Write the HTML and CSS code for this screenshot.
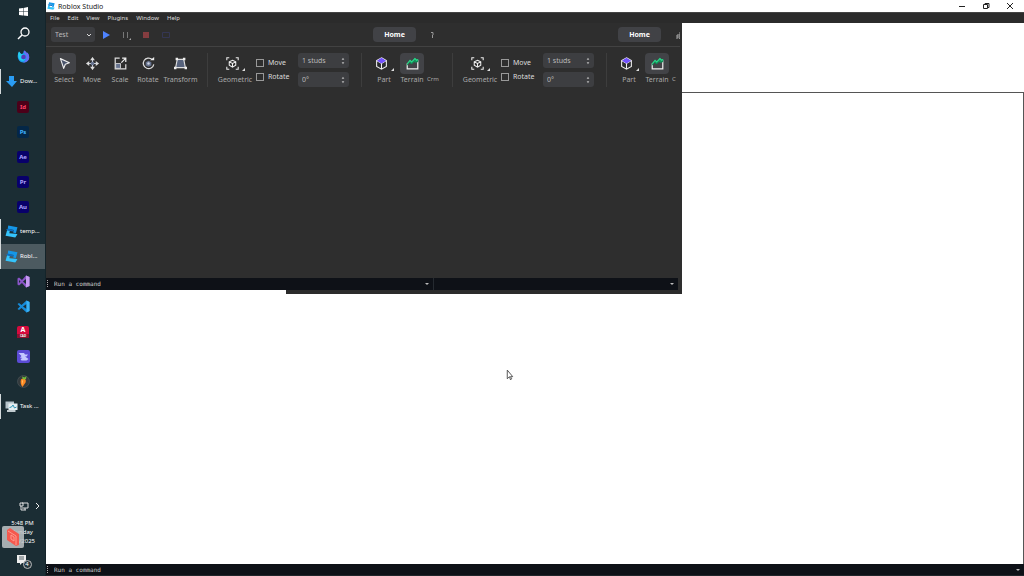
FILE: index.html
```html
<!DOCTYPE html>
<html lang="en">
<head>
<meta charset="utf-8">
<title>Roblox Studio</title>
<link rel="stylesheet" href="styles.css">
</head>
<body>
<svg class="defs" aria-hidden="true">
  <symbol id="studio" viewBox="0 0 24 24"><path fill="#1597e8" d="M6 1l17 3-3 11-5-1 1-5-11-2z"/><path fill="#35c4fb" d="M4 9l5 1-1 5 11 1 4 1-4 6-18-3z"/><path fill="#0b6fc2" d="M2 8l4-1 10 2-1 3-6-1-5-1z"/></symbol>
  <symbol id="select" viewBox="0 0 16 16"><path d="M3 2l11 5-5 2-2 5z" fill="#49536b" stroke="#eee" stroke-width="1.4" stroke-linejoin="round"/></symbol>
  <symbol id="move" viewBox="0 0 16 16"><path d="M8 1v14M1 8h14" stroke="#c9cedd" stroke-width="1.4"/><path d="M8 0l3 4H5zM8 16l3-4H5zM0 8l4-3v6zM16 8l-4-3v6z" fill="#ddd"/><path d="M6 6h4v4H6z" fill="#66738f"/></symbol>
  <symbol id="scale" viewBox="0 0 16 16"><path d="M7 1.500H1.500v13h13V9" fill="none" stroke="#ddd" stroke-width="1.5"/><path d="M2 8h6v6H2z" fill="#66738f" stroke="#ddd"/><path d="M9 7l5-5M10 1.500h4.500V6" fill="none" stroke="#eee" stroke-width="1.500"/></symbol>
  <symbol id="rotate" viewBox="0 0 16 16"><path d="M12.500 3A6.500 6.500 0 1 0 14.500 9" fill="none" stroke="#ddd" stroke-width="1.500"/><path d="M10 4h5V0z" fill="#eee"/><path d="M8 4.500l3.500 2v4L8 12l-3.500-1.500v-4z" fill="#66738f"/><circle cx="8" cy="8" r="1.500" fill="#ccd2e2"/></symbol>
  <symbol id="transform" viewBox="0 0 16 16"><path d="M4 3h8l2 10H2z" fill="#56627c" stroke="#ddd" stroke-width="1.400"/><path d="M2 1h3v3H2zM11 1h3v3h-3zM0 12h3v3H0zM13 12h3v3h-3z" fill="#eee"/></symbol>
  <symbol id="geometric" viewBox="0 0 16 16"><path d="M1 4V1h3M12 1h3v3M15 12v3h-3M4 15H1v-3M8 4l4 2v4l-4 2.500L4 10V6zM4 6l4 2 4-2M8 8v4" fill="none" stroke="#eee" stroke-width="1.300"/></symbol>
  <symbol id="part" viewBox="0 0 16 16"><path d="M8 1l6 3.500v7L8 15l-6-3.500v-7z" fill="#292b30"/><path d="M8 1.500v6.500M8 8v7M2 4.500l6 3.500 6-3.500M8 1l6 3.500v7L8 15l-6-3.500v-7z" fill="none" stroke="#eee" stroke-width="1.300"/><path d="M8 1l5.500 3.500L8 8 2.500 4.500z" fill="#7251ff"/></symbol>
  <symbol id="terrain" viewBox="0 0 16 16"><path d="M1.500 8v6.500h13V4" fill="none" stroke="#eee" stroke-width="1.500"/><path d="M1 9l4-5 2 2 4-5 2 2 2-1v4l-3 1-2-1-3 3-3-2-3 4z" fill="#128f59"/><path d="M1.500 8.500L5 4l2 2 4-4 2 2 2-1" fill="none" stroke="#2cd98b" stroke-width="1.400"/></symbol>
  <symbol id="spin" viewBox="0 0 6 10"><path d="M3 0l2 3H1zM3 10l2-3H1z" fill="#bbb"/></symbol>
  <symbol id="pin" viewBox="0 0 8 8"><path d="M1 8V4h3M1 6h3V1h4M4 3h4M3 8l3-4" fill="none" stroke="#aaa"/></symbol>
</svg>
<div class="desktop">
  <nav class="taskbar" aria-label="Taskbar">
    <button class="task short" aria-label="Start"><svg class="i9" viewBox="0 0 18 18"><path fill="#fff" d="M0 3l8-1v7H0zM9 2l9-2v9H9zM0 10h8v7l-8-1zM9 10h9v8l-9-1z"/></svg></button>
    <button class="task short" aria-label="Search"><svg class="i13" viewBox="0 0 13 13"><circle cx="8" cy="5" r="4" fill="none" stroke="#fff" stroke-width="1.300"/><path d="M5 8l-4 4" stroke="#fff" stroke-width="1.500"/></svg></button>
    <button class="task" aria-label="Firefox"><svg class="i13" viewBox="0 0 26 26"><path d="M2 8l2-5 4 5 4-1 2-6c4 2 5 4 6 6l1-2c4 6 5 13 0 17-6 5-15 4-18-3-2-4-2-7-1-11z" fill="#1d9cf0"/><path d="M2 8l2-5 4 5c5 0 6 3 5 5l-5 1c0 5 5 6 9 4-4 6-12 4-14-3z" fill="#26cff0"/><path d="M14 1c4 2 5 4 6 6l1-2c4 6 5 13 0 17-3 2-6 3-9 3 7-4 9-10 5-16-2-2-4-3-3-8z" fill="#6b6af5"/><circle cx="13" cy="14" r="4.500" fill="#5a38b8"/></svg></button>
    <button class="task named open"><svg class="i13" viewBox="0 0 13 13"><path d="M4 1h5v5h3l-5 6-6-6h3z" fill="#2a9df4"/></svg><span>Dow...</span></button>
    <button class="task"><span class="app id">Id</span></button>
    <button class="task"><span class="app ps">Ps</span></button>
    <button class="task"><span class="app ae">Ae</span></button>
    <button class="task"><span class="app ae">Pr</span></button>
    <button class="task"><span class="app ae">Au</span></button>
    <button class="task named open"><svg class="i13"><use href="#studio"/></svg><span>temp...</span></button>
    <button class="task named open current"><svg class="i13"><use href="#studio"/></svg><span>Robl...</span></button>
    <button class="task" aria-label="Visual Studio"><svg class="i13" viewBox="0 0 26 26"><path fill="#8b55c8" d="M1 7l3-2 6 5 8-9 7 3v18l-7 3-8-9-6 5-3-2zM4 10v6l3-3zM18 8l-6 5 6 5z" fill-rule="evenodd"/><path fill="#c69af2" d="M18 1l7 3v18l-7 3z"/></svg></button>
    <button class="task" aria-label="Visual Studio Code"><svg class="i13" viewBox="0 0 26 26"><path fill="#168bd9" d="M1 8l3-2 5 4L19 1l6 3v18l-6 3-10-9-5 4-3-2 5-5zM19 8l-7 5 7 5z" fill-rule="evenodd"/><path fill="#38b1f5" d="M19 1l6 3v18l-6 3z"/></svg></button>
    <button class="task"><span class="app cad">A<small>CAD</small></span></button>
    <button class="task" aria-label="Purple app"><svg class="i13" viewBox="0 0 26 26"><rect width="26" height="26" rx="4" fill="#5b4bd5"/><path d="M3 6h11l2 3h6l-3 4h-3l7 5-4 3H9l-2-3 4-2-5-1 3-3z" fill="#c5c9ff"/></svg></button>
    <button class="task" aria-label="FL Studio"><svg class="i13" viewBox="0 0 26 26"><circle cx="13" cy="13" r="12" fill="#343a3d" stroke="#596266"/><path d="M8 9c4-4 12-1 9 6l-6 9c-3-3-5-10-3-15z" fill="#ff8a24"/><path d="M12 9l-2-6 5 2 4-3-1 6z" fill="#6fbe3b"/><path d="M10 11l2 0-1 9z" fill="#ffd27a"/></svg></button>
    <button class="task named open"><svg class="i13" viewBox="0 0 26 26"><path d="M1 3h17v14H1z" fill="#b5c3ca"/><path d="M7 7h18v13H7z" fill="#e4eef2"/><path d="M9 15l4-1 3-4 3 6 4-2" fill="none" stroke="#2d94b5" stroke-width="2"/><path d="M4 20h17v4H4z" fill="#c2ccd0"/></svg><span>Task ...</span></button>
    <div class="tray">
      <div class="tray-icons"><svg class="net" viewBox="0 0 10 9"><path d="M3 1h6v5H3M1 1v3h3V1zM2 4v4h5M6 6v2" fill="none" stroke="#ddd"/></svg><svg class="more" viewBox="0 0 5 8"><path d="M1 1l3 3-3 3" fill="none" stroke="#eee"/></svg></div>
      <div class="clock"><time>5:48 PM</time><span>Sunday</span><span>8/3/2025</span>
        <svg class="drag" viewBox="0 0 22 22"><rect width="22" height="22" rx="2" fill="#bec4c7" fill-opacity=".85"/><path d="M5 4l3-2 9 6v11l-3 1-9-6z" fill="#f4594e"/><path d="M6 5l8 5v9M9 9l3 2v4l-3-2z" fill="none" stroke="#ff9a8f"/></svg>
      </div>
      <button class="notice" aria-label="4 notifications"><svg viewBox="0 0 14 14"><path d="M1 1h9v8H6l-2 2V9H1z" fill="#eee"/><path d="M3 3h5M3 5h5" stroke="#526067"/></svg><span class="count">4</span></button>
    </div>
  </nav>
  <main class="window">
    <header class="titlebar"><svg class="logo"><use href="#studio"/></svg><h1>Roblox Studio</h1>
      <div class="controls"><button aria-label="Minimize"><svg viewBox="0 0 8 8"><path d="M1 4.500h6" stroke="#222"/></svg></button><button aria-label="Restore"><svg viewBox="0 0 8 8"><path d="M1.500 2.500h4v4h-4zM3 2.500v-1h4v4H6" fill="none" stroke="#222"/></svg></button><button aria-label="Close"><svg viewBox="0 0 8 8"><path d="M1 1l6 6M7 1L1 7" stroke="#222"/></svg></button></div>
    </header>
    <nav class="menu" aria-label="Menu"><button>File</button><button>Edit</button><button>View</button><button>Plugins</button><button>Window</button><button>Help</button></nav>
    <div class="stage">
      <section class="panel">
        <div class="panes">
          <div class="pane first">
            <div class="tabs">
              <div class="mode"><select aria-label="Mode"><option>Test</option></select><svg viewBox="0 0 6 4"><path d="M1 1l2 2 2-2" fill="none" stroke="#ddd"/></svg></div>
              <div class="play">
                <button aria-label="Play"><svg viewBox="0 0 10 10"><path d="M2 1l7 4-7 4z" fill="#4e83ff"/></svg></button>
                <button aria-label="Pause"><svg viewBox="0 0 10 10"><path d="M2.500 2v6M6.500 2v6" stroke="#777"/><path d="M10 8v2H8z" fill="#aaa"/></svg></button>
                <button aria-label="Stop"><svg viewBox="0 0 10 10"><path d="M2 2h6v6H2z" fill="#853d40"/></svg></button>
                <button aria-label="Device"><svg viewBox="0 0 10 10"><path d="M1.500 2.500h7v5h-7z" fill="none" stroke="#343653"/></svg></button>
              </div>
              <button class="home">Home</button><svg class="cut" viewBox="0 0 3 6"><path d="M0 .5h2V3M1.500 3v3" fill="none" stroke="#999"/></svg>
            </div>
            <div class="tools">
              <div class="edit">
                <button class="tool on"><i><svg><use href="#select"/></svg></i>Select</button>
                <button class="tool"><i><svg><use href="#move"/></svg></i>Move</button>
                <button class="tool"><i><svg><use href="#scale"/></svg></i>Scale</button>
                <button class="tool"><i><svg><use href="#rotate"/></svg></i>Rotate</button>
                <button class="tool wide"><i><svg><use href="#transform"/></svg></i>Transform</button>
              </div>
              <div class="snap">
                <button class="tool geo more-menu"><i><svg><use href="#geometric"/></svg></i>Geometric</button>
                <div class="checks"><label><input type="checkbox">Move</label><label><input type="checkbox">Rotate</label></div>
                <div class="steps"><label><input value="1 studs" aria-label="Move step"><svg><use href="#spin"/></svg></label><label><input value="0°" aria-label="Rotate step"><svg><use href="#spin"/></svg></label></div>
              </div>
              <div class="create"><button class="tool part more-menu"><i><svg><use href="#part"/></svg></i>Part</button><button class="tool on"><i><svg><use href="#terrain"/></svg></i>Terrain</button><span class="crop">Crm</span></div>
            </div>
          </div>
          <div class="pane second">
            <div class="tabs"><button class="home">Home</button><svg class="pin"><use href="#pin"/></svg></div>
            <div class="tools">
              <div class="snap">
                <button class="tool geo more-menu"><i><svg><use href="#geometric"/></svg></i>Geometric</button>
                <div class="checks"><label><input type="checkbox">Move</label><label><input type="checkbox">Rotate</label></div>
                <div class="steps"><label><input value="1 studs" aria-label="Move step"><svg><use href="#spin"/></svg></label><label><input value="0°" aria-label="Rotate step"><svg><use href="#spin"/></svg></label></div>
              </div>
              <div class="create"><button class="tool part more-menu"><i><svg><use href="#part"/></svg></i>Part</button><button class="tool on"><i><svg><use href="#terrain"/></svg></i>Terrain</button><span class="crop">C</span></div>
            </div>
          </div>
        </div>
        <div class="command inner"><span class="grip"></span><input value="Run a command" aria-label="Command"><span class="arrow"></span><span class="extra"><span class="arrow"></span></span></div>
        <div class="edge"></div>
      </section>
      <section class="canvas" aria-label="Workspace"></section>
      <svg class="cursor" viewBox="0 0 7 11"><path d="M1 1v8l2-2 1 3 1-1-1-2h2z" fill="#fff" stroke="#444" stroke-width=".8"/></svg>
    </div>
    <footer class="command"><span class="grip"></span><input value="Run a command" aria-label="Command"><span class="arrow"></span></footer>
  </main>
</div>
</body>
</html>
```
FILE: styles.css
```css
* { box-sizing: border-box; }
body { margin: 0; font: 7px/9px "Noto Sans", sans-serif; color: #ddd; }
button, input, select { font: inherit; color: inherit; border: 0; padding: 0; margin: 0; background: none; }
svg { display: block; flex: none; }
.defs { width: 0; height: 0; position: absolute; }
.desktop { display: flex; height: 100vh; overflow: hidden; }

.taskbar { width: 46px; flex: none; display: flex; flex-direction: column; background: #1b2d34; color: #fff; border-right: 1px solid #14242a; font-size: 6px; }
.task { height: 25px; flex: none; display: flex; align-items: center; justify-content: center; border-left: 1px solid transparent; }
.short { height: 22px; }
.named { justify-content: flex-start; padding-left: 4px; gap: 2px; white-space: nowrap; }
.open { border-left-color: #d4dadc; }
.current { background: #4c5a60; }
.i9 { width: 9px; height: 9px; }
.i13 { width: 13px; height: 13px; }
.app { width: 12px; height: 12px; border-radius: 2px; line-height: 12px; font-weight: 700; }
.id { background: #4b0019; color: #ff4268; }
.ps { background: #042747; color: #42b5ff; }
.ae { background: #08006a; color: #b2a5ff; }
.cad { background: #d60b3e; color: #fff; font-size: 7px; line-height: 8px; display: flex; flex-direction: column; }
.cad small { font-size: 3px; line-height: 4px; background: #90102e; }
.tray { margin-top: auto; padding-bottom: 6px; }
.tray-icons { display: flex; align-items: center; gap: 6px; padding-left: 19px; height: 16px; }
.net { width: 10px; height: 9px; }
.more { width: 5px; height: 8px; }
.clock { position: relative; display: flex; flex-direction: column; align-items: center; margin: 5px 0 6px; }
.drag { position: absolute; left: 2px; top: 7px; width: 22px; height: 22px; }
.notice { position: relative; display: block; width: 14px; height: 18px; margin: 0 auto; }
.notice svg { width: 14px; height: 14px; }
.count { position: absolute; right: -2px; bottom: 1px; width: 9px; height: 9px; border: 1px solid #bbb; border-radius: 50%; background: #27373e; line-height: 7px; }

.window { flex: 1; min-width: 0; display: flex; flex-direction: column; background: #fff; }
.titlebar { height: 12px; flex: none; display: flex; align-items: center; gap: 3px; padding-left: 1px; color: #222; }
.titlebar h1 { font-size: 7px; line-height: 9px; font-weight: 400; margin: 0; }
.logo { width: 8px; height: 8px; }
.controls { margin-left: auto; display: flex; gap: 16px; padding-right: 10px; }
.controls svg { width: 8px; height: 8px; }
.menu { height: 11px; flex: none; display: flex; align-items: center; gap: 8px; padding-left: 4px; background: #2b2b2b; border-top: 1px solid #444; font-size: 6px; }
.stage { flex: 1; min-height: 0; display: flex; align-items: flex-start; position: relative; }
.panel { width: 65%; height: 50%; display: flex; flex-direction: column; }
.panes { flex: 1; display: flex; background: #2e2e2e; border-right: 2px solid #2e2e2e; min-height: 0; }
.pane { overflow: hidden; min-width: 0; }
.first { flex: 0 0 395px; }
.second { flex: 1; }
.tabs { height: 24px; display: flex; align-items: center; border-bottom: 1px solid #424242; }
.mode { display: flex; align-items: center; width: 44px; height: 15px; margin-left: 5px; background: #3c3d40; border-radius: 3px; position: relative; }
.mode select { appearance: none; width: 100%; height: 100%; padding-left: 4px; color: #bbb; }
.mode svg { position: absolute; right: 3px; width: 6px; height: 4px; pointer-events: none; }
.play { display: flex; gap: 10px; margin-left: 6px; }
.play svg { width: 10px; height: 10px; }
.home { width: 43px; height: 15px; flex: none; border-radius: 4px; background: #414246; color: #fff; font-weight: 700; }
.first .home { margin-left: auto; }
.cut { width: 3px; height: 6px; margin: 0 7px 0 15px; }
.second .home { margin-left: 177px; }
.pin { width: 8px; height: 8px; margin-left: 15px; }
.tools { display: flex; padding-top: 6px; white-space: nowrap; }
.edit { display: flex; width: 161px; padding-left: 4px; flex: none; }
.tool { width: 28px; height: 32px; flex: none; display: flex; flex-direction: column; align-items: center; color: #aaa; position: relative; }
.tool i { display: flex; align-items: center; justify-content: center; width: 24px; height: 21px; margin-bottom: 1px; border-radius: 4px; flex: none; }
.tool svg { width: 13px; height: 13px; }
.on i { background: #424347; }
.wide { width: 37px; }
.more-menu::after { content: ""; position: absolute; left: 50%; top: 15px; margin-left: 7px; border-left: 3px solid transparent; border-bottom: 3px solid #ddd; }
.more-menu i { padding-right: 5px; }
.snap { display: flex; width: 154px; flex: none; border-left: 1px solid #3d3d3d; padding-left: 10px; }
.second .snap { margin-left: 11px; }
.geo { width: 34px; }
.checks { width: 46px; padding: 5px 0 0 4px; display: flex; flex-direction: column; gap: 5px; }
.checks label { display: flex; align-items: center; gap: 4px; }
.checks input { appearance: none; width: 8px; height: 8px; border: 1px solid #999; flex: none; }
.steps { display: flex; flex-direction: column; gap: 4px; width: 51px; }
.steps label { display: flex; align-items: center; height: 15px; background: #3d3e41; border-radius: 3px; color: #bbb; padding: 0 4px; }
.steps input { flex: 1; min-width: 0; }
.steps svg { width: 4px; height: 8px; }
.create { display: flex; flex: none; border-left: 1px solid #3d3d3d; padding-left: 8px; }
.crop { padding-top: 22px; margin-left: 1px; color: #aaa; font-size: 6px; }
.part { width: 28px; }

.command { height: 12px; flex: none; display: flex; align-items: center; background: #0e1117; border-bottom: 1px solid #20262b; font: 6px/9px "DejaVu Sans Mono", monospace; color: #ccc; }
.command input { flex: 1; min-width: 0; height: 9px; }
.grip { width: 2px; height: 7px; margin: 0 5px 0 1px; border-left: 1px dotted #aaa; }
.arrow { border: 2px solid transparent; border-top-color: #bbb; border-bottom: 0; margin-right: 4px; }
.inner { border: solid #2e2e2e; border-width: 0 4px 0 0; }
.extra { flex: 0 0 245px; height: 100%; display: flex; align-items: center; justify-content: flex-end; border-left: 1px solid #252a30; }
.edge { height: 4px; flex: none; margin-left: 240px; background: #2b2b2b; }
.canvas { flex: 1; align-self: stretch; margin-top: 69px; border: solid #555; border-width: 1px 1px 0 0; }
.cursor { position: absolute; left: 460px; top: 346px; width: 8px; height: 12px; }
```
